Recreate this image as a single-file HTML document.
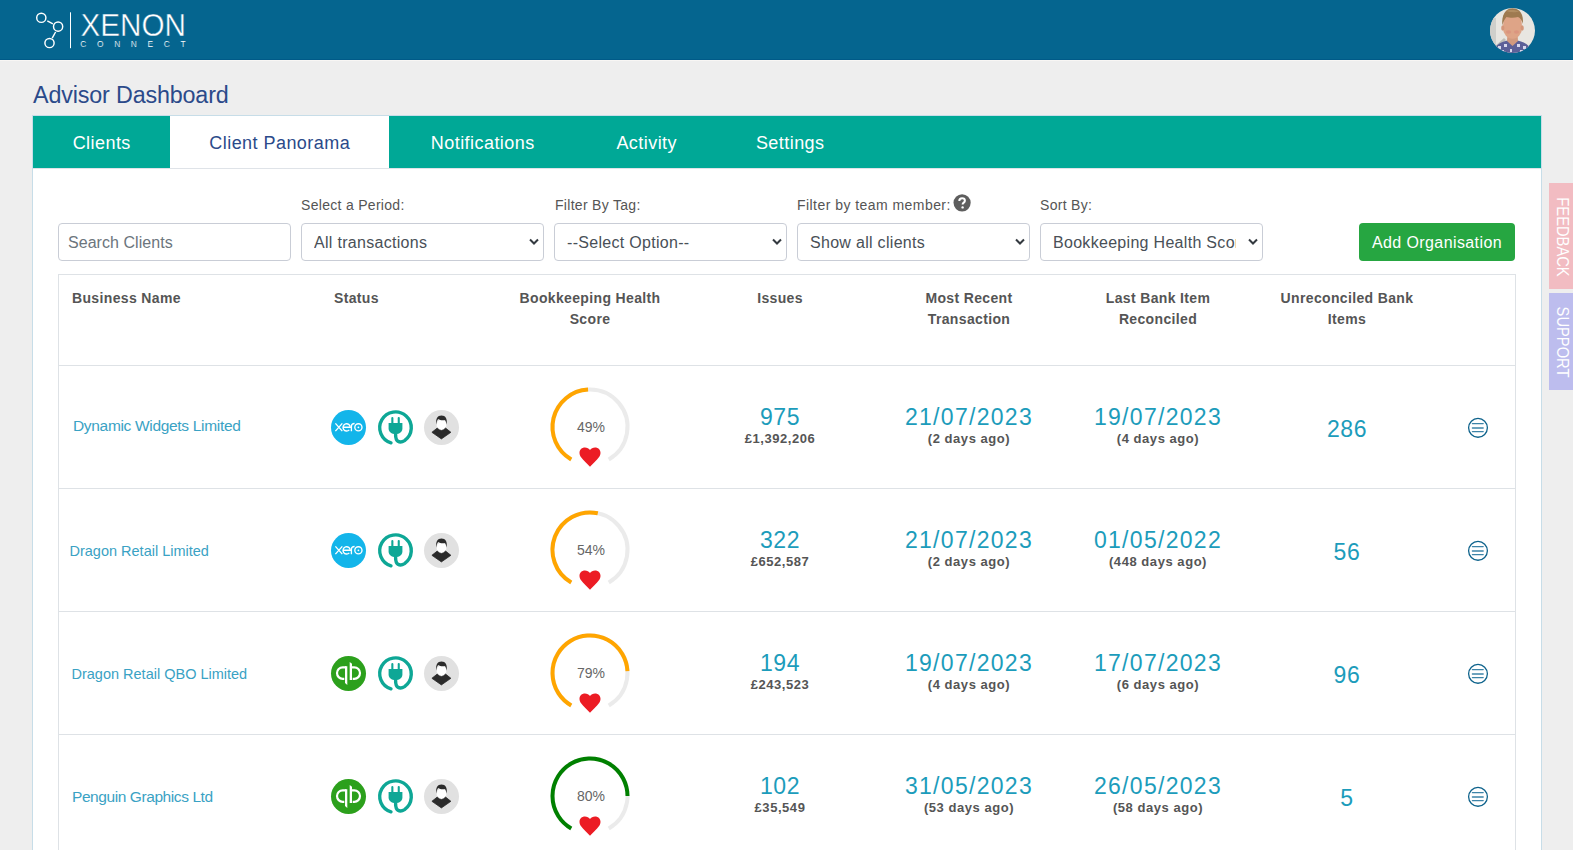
<!DOCTYPE html>
<html><head><meta charset="utf-8"><style>
*{box-sizing:border-box;margin:0;padding:0}
html,body{width:1573px;height:850px;overflow:hidden;background:#eeeeee;font-family:"Liberation Sans",sans-serif}
svg{position:absolute;overflow:visible}
#hdr{position:absolute;left:0;top:0;width:1573px;height:60px;background:#05658f}
#title{position:absolute;left:33px;top:80.7px;font-size:23.3px;line-height:28px;color:#2b4a8a;white-space:nowrap;letter-spacing:-0.15px}
#cont{position:absolute;left:32px;top:115px;width:1510px;height:760px;background:#fff;border:1px solid #c7dde8}
#tabs{position:absolute;left:33px;top:116px;width:1508px;height:53px;background:#00a896;border-bottom:1px solid #dfe3e8}
.tab{position:absolute;top:117px;height:52px;line-height:52px;font-size:18px;color:#fff;text-align:center;white-space:nowrap;letter-spacing:0.45px;text-indent:0.45px}
.tab.act{color:#2b4a8a}
#acttab{position:absolute;left:170px;top:116px;width:219px;height:52px;background:#fff}
.lbl{position:absolute;top:195.5px;font-size:14px;line-height:18px;color:#555;white-space:nowrap;letter-spacing:0.3px}
.inp{position:absolute;top:223px;height:38px;border:1px solid #c9cdd6;border-radius:4px;background:#fff;font-size:16px;line-height:37px;color:#495057;padding-left:12px;white-space:nowrap;overflow:hidden;letter-spacing:0.3px}
#btn{position:absolute;left:1359px;top:223px;width:156px;height:38px;background:#26a641;border-radius:4px;color:#fff;font-size:16px;line-height:39.6px;text-align:center;white-space:nowrap;letter-spacing:0.4px}
#tbl{position:absolute;left:58px;top:274px;width:1458px;height:600px;border:1px solid #dee2e6}
.hline{position:absolute;left:58px;width:1458px;height:1px;background:#dee2e6}
.th{position:absolute;font-size:14px;font-weight:bold;color:#555;line-height:21px;text-align:center;white-space:nowrap;width:240px;letter-spacing:0.35px}
.name{position:absolute;font-size:14.5px;color:#3aa2c4;white-space:nowrap;line-height:18px}
.big{position:absolute;font-size:23px;color:#1c9cbb;text-align:center;white-space:nowrap;line-height:28px;width:240px;letter-spacing:0.6px}
.sub{position:absolute;font-size:13px;font-weight:bold;color:#555;text-align:center;white-space:nowrap;line-height:16px;width:240px;letter-spacing:0.55px}
.pct{position:absolute;font-size:14px;color:#666;text-align:center;white-space:nowrap;line-height:16px;width:60px;letter-spacing:0px}
.side{position:absolute;left:1549px;width:24px;overflow:hidden}
.side span{position:absolute;left:calc(50% + 0.5px);top:calc(50% + 0.5px);transform:translate(-50%,-50%) rotate(90deg) scaleX(0.865);color:#fff;font-size:17px;white-space:nowrap;line-height:20px}
</style></head><body>
<div id="hdr"></div><div style="position:absolute;left:0;top:59px;width:1573px;height:1px;background:#005a88"></div><div style="position:absolute;left:0;top:60px;width:1573px;height:1px;background:#f8f6f4"></div>
<svg style="left:0;top:0" width="200" height="60" viewBox="0 0 200 60">
<g fill="none" stroke="#fff" stroke-width="1.45">
<circle cx="41.3" cy="17.8" r="4.6"/><circle cx="58.1" cy="26.6" r="4.6"/><circle cx="49.5" cy="43" r="4.6"/>
<line x1="47.3" y1="20.9" x2="52.9" y2="23.8"/><line x1="55.6" y1="32" x2="52.2" y2="38.1"/>
<line x1="70.5" y1="12.3" x2="70.5" y2="48.2" stroke-width="1"/>
</g>
<text x="80.5" y="36" fill="#fff" stroke="#05658f" stroke-width="0.45" font-family="Liberation Sans" font-size="30.5" textLength="105.5" lengthAdjust="spacingAndGlyphs">XENON</text>
<text x="80.3" y="47" fill="#fff" stroke="#05658f" stroke-width="0.15" font-family="Liberation Sans" font-size="8.4" letter-spacing="10.65">CONNECT</text>
</svg>
<svg style="left:1490px;top:8px" width="45" height="45" viewBox="0 0 45 45">
<defs><clipPath id="av"><circle cx="22.5" cy="22.5" r="22.5"/></clipPath></defs>
<g clip-path="url(#av)">
<rect width="45" height="45" fill="#e8e6e1"/>
<rect x="0" y="10" width="6" height="28" fill="#cfcfcb"/>
<path d="M3 40 L14 30 L16 32 L6 43 Z" fill="#bdbdb8"/>
<path d="M3 45 C4 39 8 35.5 14 33.5 L22.5 31 L31 33.5 C37 35.5 41 39 42 45 Z" fill="#5d6098"/>
<path d="M8 38 h3 v3 h-3z M14 36 h3 v3 h-3z M27 36 h3 v3 h-3z M33 38 h3 v3 h-3z M11 42 h3 v3 h-3z M30 42 h3 v3 h-3z M20 41 h2 v3 h-2z" fill="#d8d8ec"/>
<path d="M17.5 26 L27.5 26 L28 33 L22.5 38 L17 33 Z" fill="#d29a7f"/>
<path d="M13.4 7.5 H31.6 V22 H13.4 Z" fill="#dea487"/><ellipse cx="22.5" cy="19.5" rx="9.6" ry="11.3" fill="#dea487"/><ellipse cx="12.8" cy="20" rx="1.6" ry="2.8" fill="#d4967a"/><ellipse cx="32.2" cy="20" rx="1.6" ry="2.8" fill="#d4967a"/>
<ellipse cx="18.5" cy="24" rx="2.6" ry="1.8" fill="#d88c7a" opacity="0.6"/>
<ellipse cx="26.5" cy="24" rx="2.6" ry="1.8" fill="#d88c7a" opacity="0.6"/>
<path d="M12.4 17.5 C11.3 7.5 15.5 0.3 22.5 0.3 C30 0.3 34 7 32.8 16 C32 12.5 30.5 10 28 9 C24 10.3 19 9.8 16.5 9 C15 10.5 13.3 13.5 12.4 17.5 Z" fill="#9e7a50"/><path d="M16 3 C19 1.5 26 1.5 29 3.5 C26 4.5 20 4.5 16 3 Z" fill="#b8966a" opacity="0.7"/>
</g></svg>
<div id="title">Advisor Dashboard</div>
<div id="cont"></div>
<div id="tabs"></div>
<div id="acttab"></div>
<div class="tab" style="left:33px;width:137px">Clients</div>
<div class="tab act" style="left:170px;width:219px">Client Panorama</div>
<div class="tab" style="left:389px;width:187px">Notifications</div>
<div class="tab" style="left:576px;width:141px">Activity</div>
<div class="tab" style="left:717px;width:146px">Settings</div>
<div class="lbl" style="left:301px">Select a Period:</div>
<div class="lbl" style="left:555px">Filter By Tag:</div>
<div class="lbl" style="left:797px;letter-spacing:0.45px">Filter by team member:</div>
<div class="lbl" style="left:1040px">Sort By:</div>
<svg style="left:953px;top:194px" width="18" height="18" viewBox="0 0 18 18"><circle cx="9.1" cy="8.8" r="8.6" fill="#5e5e5e"/>
<path d="M6.3 7 C6.3 5.3 7.5 4.3 9.1 4.3 C10.8 4.3 11.9 5.3 11.9 6.7 C11.9 8.6 9.6 8.6 9.6 10.4" fill="none" stroke="#fff" stroke-width="2"/>
<circle cx="9.6" cy="13.4" r="1.2" fill="#fff"/></svg>
<div class="inp" style="left:58px;width:233px;color:#6c757d;padding-left:9px;letter-spacing:0.05px">Search Clients</div>
<div class="inp" style="left:301px;width:243px"><span style="display:block;width:203px;overflow:hidden">All transactions</span></div>
<svg style="left:529px;top:238px" width="10" height="8" viewBox="0 0 10 8"><path d="M1 1.5 L5 5.5 L9 1.5" fill="none" stroke="#343a40" stroke-width="2"/></svg>
<div class="inp" style="left:554px;width:233px"><span style="display:block;width:193px;overflow:hidden">--Select Option--</span></div>
<svg style="left:772px;top:238px" width="10" height="8" viewBox="0 0 10 8"><path d="M1 1.5 L5 5.5 L9 1.5" fill="none" stroke="#343a40" stroke-width="2"/></svg>
<div class="inp" style="left:797px;width:233px"><span style="display:block;width:193px;overflow:hidden">Show all clients</span></div>
<svg style="left:1015px;top:238px" width="10" height="8" viewBox="0 0 10 8"><path d="M1 1.5 L5 5.5 L9 1.5" fill="none" stroke="#343a40" stroke-width="2"/></svg>
<div class="inp" style="left:1040px;width:223px"><span style="display:block;width:183px;overflow:hidden">Bookkeeping Health Score</span></div>
<svg style="left:1248px;top:238px" width="10" height="8" viewBox="0 0 10 8"><path d="M1 1.5 L5 5.5 L9 1.5" fill="none" stroke="#343a40" stroke-width="2"/></svg>
<div id="btn">Add Organisation</div>
<div id="tbl"></div>
<div class="hline" style="top:365px"></div>
<div class="hline" style="top:488px"></div>
<div class="hline" style="top:611px"></div>
<div class="hline" style="top:734px"></div>
<div class="th" style="left:72px;top:288px;text-align:left">Business Name</div>
<div class="th" style="left:334px;top:288px;text-align:left">Status</div>
<div class="th" style="left:470px;top:288px">Bookkeeping Health<br>Score</div>
<div class="th" style="left:660px;top:288px">Issues</div>
<div class="th" style="left:849px;top:288px">Most Recent<br>Transaction</div>
<div class="th" style="left:1038px;top:288px">Last Bank Item<br>Reconciled</div>
<div class="th" style="left:1227px;top:288px">Unreconciled Bank<br>Items</div>
<div class="name" style="left:73px;top:416.75px;font-size:15.5px;letter-spacing:-0.32px">Dynamic Widgets Limited</div>
<svg style="left:328px;top:406px" width="42" height="42" viewBox="0 0 42 42"><circle cx="20.5" cy="21.5" r="17.5" fill="#13b5ea"/>
<g fill="none" stroke="#fff" stroke-width="1.35">
<path d="M7.4 17.4 L14.3 25.1 M14.3 17.4 L7.4 25.1"/>
<path d="M15.1 21.2 H22.3 A3.65 3.65 0 1 0 21.3 23.9"/>
<path d="M23.4 25.2 V20.6 C23.4 18.6 24.6 17.5 26.6 17.5"/>
<circle cx="30.4" cy="21.3" r="3.6"/>
</g><circle cx="30.4" cy="21.3" r="0.9" fill="#fff"/></svg>
<svg style="left:375px;top:406px" width="42" height="42" viewBox="0 0 42 42"><g fill="none" stroke="#0ea796" stroke-width="3.4" stroke-linecap="round">
<path d="M15.97 36.77 A15.77 15.77 0 1 1 29.55 34.59 C27.3 36 24.8 36.3 22.9 35.2 C21.2 34.2 20.6 32.2 20.6 28.5"/>
</g>
<g fill="#0ea796">
<path d="M13.6 17 H27.4 V22.6 C27.4 26.1 24.5 28.1 20.5 28.1 C16.5 28.1 13.6 26.1 13.6 22.6 Z"/>
<rect x="16.3" y="11" width="2.1" height="7" rx="1"/><rect x="22.7" y="11" width="2.1" height="7" rx="1"/>
</g></svg>
<svg style="left:421px;top:406px" width="42" height="42" viewBox="0 0 42 42"><circle cx="20.5" cy="21.5" r="17.5" fill="#e1e1e1"/>
<ellipse cx="20.5" cy="19" rx="4.9" ry="5.4" fill="#fff"/>
<path d="M10.9 26.3 L16.2 22.1 Q20.4 26.8 24.6 22.1 L29.9 26.3 L20.4 32.9 Z" fill="#2b2b2b" stroke="#2b2b2b" stroke-width="0.8" stroke-linejoin="round"/>
<path d="M15.3 18.8 C14.6 12.5 16.5 9.6 20.5 9.6 C24.5 9.6 26.4 12.5 25.7 18.8 C25.1 15.6 24.6 14.3 23.7 13.9 C21.6 14.9 18.9 14.2 17.4 12.9 C16.2 13.8 15.6 15.6 15.3 18.8 Z" fill="#2b2b2b"/></svg>
<svg style="left:545px;top:381.5px" width="90" height="90" viewBox="0 0 90 90"><path d="M26.25 77.48 A37.5 37.5 0 1 1 63.75 77.48" fill="none" stroke="#ebebeb" stroke-width="4"/><path d="M26.25 77.48 A37.5 37.5 0 0 1 43.04 7.55" fill="none" stroke="#ffa500" stroke-width="4"/><path transform="translate(34.5 65.4)" d="M10.5 19.3 C8 16.5 3.5 12.5 1.6 9.8 C0.5 8.3 0 6.8 0 5.3 C0 2.2 2.4 0 5.4 0 C7.6 0 9.4 1.1 10.5 2.7 C11.6 1.1 13.4 0 15.6 0 C18.6 0 21 2.2 21 5.3 C21 6.8 20.5 8.3 19.4 9.8 C17.5 12.5 13 16.5 10.5 19.3 Z" fill="#ec1c24"/></svg>
<div class="pct" style="left:561px;top:419px">49%</div>
<div class="big" style="left:660px;top:403px">975</div>
<div class="sub" style="left:660px;top:431px">£1,392,206</div>
<div class="big" style="left:849px;top:403px;letter-spacing:1.3px">21/07/2023</div>
<div class="sub" style="left:849px;top:431px">(2 days ago)</div>
<div class="big" style="left:1038px;top:403px;letter-spacing:1.3px">19/07/2023</div>
<div class="sub" style="left:1038px;top:431px">(4 days ago)</div>
<div class="big" style="left:1227px;top:415px">286</div>
<svg style="left:1464px;top:414px" width="28" height="28" viewBox="0 0 28 28"><circle cx="14" cy="13.85" r="9.4" fill="none" stroke="#0d628b" stroke-width="1.3"/>
<path d="M8.4 9.55 H19.2 M8.4 14 H19.2 M8.4 17.6 H19.2" stroke="#3d84a8" stroke-width="1.3" stroke-linecap="round"/></svg>
<div class="name" style="left:69.5px;top:541.5px;font-size:14.5px;letter-spacing:0px">Dragon Retail Limited</div>
<svg style="left:328px;top:529px" width="42" height="42" viewBox="0 0 42 42"><circle cx="20.5" cy="21.5" r="17.5" fill="#13b5ea"/>
<g fill="none" stroke="#fff" stroke-width="1.35">
<path d="M7.4 17.4 L14.3 25.1 M14.3 17.4 L7.4 25.1"/>
<path d="M15.1 21.2 H22.3 A3.65 3.65 0 1 0 21.3 23.9"/>
<path d="M23.4 25.2 V20.6 C23.4 18.6 24.6 17.5 26.6 17.5"/>
<circle cx="30.4" cy="21.3" r="3.6"/>
</g><circle cx="30.4" cy="21.3" r="0.9" fill="#fff"/></svg>
<svg style="left:375px;top:529px" width="42" height="42" viewBox="0 0 42 42"><g fill="none" stroke="#0ea796" stroke-width="3.4" stroke-linecap="round">
<path d="M15.97 36.77 A15.77 15.77 0 1 1 29.55 34.59 C27.3 36 24.8 36.3 22.9 35.2 C21.2 34.2 20.6 32.2 20.6 28.5"/>
</g>
<g fill="#0ea796">
<path d="M13.6 17 H27.4 V22.6 C27.4 26.1 24.5 28.1 20.5 28.1 C16.5 28.1 13.6 26.1 13.6 22.6 Z"/>
<rect x="16.3" y="11" width="2.1" height="7" rx="1"/><rect x="22.7" y="11" width="2.1" height="7" rx="1"/>
</g></svg>
<svg style="left:421px;top:529px" width="42" height="42" viewBox="0 0 42 42"><circle cx="20.5" cy="21.5" r="17.5" fill="#e1e1e1"/>
<ellipse cx="20.5" cy="19" rx="4.9" ry="5.4" fill="#fff"/>
<path d="M10.9 26.3 L16.2 22.1 Q20.4 26.8 24.6 22.1 L29.9 26.3 L20.4 32.9 Z" fill="#2b2b2b" stroke="#2b2b2b" stroke-width="0.8" stroke-linejoin="round"/>
<path d="M15.3 18.8 C14.6 12.5 16.5 9.6 20.5 9.6 C24.5 9.6 26.4 12.5 25.7 18.8 C25.1 15.6 24.6 14.3 23.7 13.9 C21.6 14.9 18.9 14.2 17.4 12.9 C16.2 13.8 15.6 15.6 15.3 18.8 Z" fill="#2b2b2b"/></svg>
<svg style="left:545px;top:504.5px" width="90" height="90" viewBox="0 0 90 90"><path d="M26.25 77.48 A37.5 37.5 0 1 1 63.75 77.48" fill="none" stroke="#ebebeb" stroke-width="4"/><path d="M26.25 77.48 A37.5 37.5 0 0 1 52.80 8.32" fill="none" stroke="#ffa500" stroke-width="4"/><path transform="translate(34.5 65.4)" d="M10.5 19.3 C8 16.5 3.5 12.5 1.6 9.8 C0.5 8.3 0 6.8 0 5.3 C0 2.2 2.4 0 5.4 0 C7.6 0 9.4 1.1 10.5 2.7 C11.6 1.1 13.4 0 15.6 0 C18.6 0 21 2.2 21 5.3 C21 6.8 20.5 8.3 19.4 9.8 C17.5 12.5 13 16.5 10.5 19.3 Z" fill="#ec1c24"/></svg>
<div class="pct" style="left:561px;top:542px">54%</div>
<div class="big" style="left:660px;top:526px">322</div>
<div class="sub" style="left:660px;top:554px">£652,587</div>
<div class="big" style="left:849px;top:526px;letter-spacing:1.3px">21/07/2023</div>
<div class="sub" style="left:849px;top:554px">(2 days ago)</div>
<div class="big" style="left:1038px;top:526px;letter-spacing:1.3px">01/05/2022</div>
<div class="sub" style="left:1038px;top:554px">(448 days ago)</div>
<div class="big" style="left:1227px;top:538px">56</div>
<svg style="left:1464px;top:537px" width="28" height="28" viewBox="0 0 28 28"><circle cx="14" cy="13.85" r="9.4" fill="none" stroke="#0d628b" stroke-width="1.3"/>
<path d="M8.4 9.55 H19.2 M8.4 14 H19.2 M8.4 17.6 H19.2" stroke="#3d84a8" stroke-width="1.3" stroke-linecap="round"/></svg>
<div class="name" style="left:71.5px;top:665px;font-size:14.5px;letter-spacing:0px">Dragon Retail QBO Limited</div>
<svg style="left:328px;top:652px" width="42" height="42" viewBox="0 0 42 42"><circle cx="20.5" cy="21.5" r="17.5" fill="#2ca01c"/>
<g fill="none" stroke="#fff" stroke-width="2.2">
<path d="M18.1 15.4 H14.7 A5.7 5.7 0 0 0 14.7 26.8 H16.3"/>
<path d="M22.9 15.4 H26.3 A5.7 5.7 0 0 1 26.3 26.8 H24.7"/>
</g>
<path d="M17 14.3 H19.3 V32.9 L17 31 Z M21.7 9.9 L24 11.8 V27.9 H21.7 Z" fill="#fff"/></svg>
<svg style="left:375px;top:652px" width="42" height="42" viewBox="0 0 42 42"><g fill="none" stroke="#0ea796" stroke-width="3.4" stroke-linecap="round">
<path d="M15.97 36.77 A15.77 15.77 0 1 1 29.55 34.59 C27.3 36 24.8 36.3 22.9 35.2 C21.2 34.2 20.6 32.2 20.6 28.5"/>
</g>
<g fill="#0ea796">
<path d="M13.6 17 H27.4 V22.6 C27.4 26.1 24.5 28.1 20.5 28.1 C16.5 28.1 13.6 26.1 13.6 22.6 Z"/>
<rect x="16.3" y="11" width="2.1" height="7" rx="1"/><rect x="22.7" y="11" width="2.1" height="7" rx="1"/>
</g></svg>
<svg style="left:421px;top:652px" width="42" height="42" viewBox="0 0 42 42"><circle cx="20.5" cy="21.5" r="17.5" fill="#e1e1e1"/>
<ellipse cx="20.5" cy="19" rx="4.9" ry="5.4" fill="#fff"/>
<path d="M10.9 26.3 L16.2 22.1 Q20.4 26.8 24.6 22.1 L29.9 26.3 L20.4 32.9 Z" fill="#2b2b2b" stroke="#2b2b2b" stroke-width="0.8" stroke-linejoin="round"/>
<path d="M15.3 18.8 C14.6 12.5 16.5 9.6 20.5 9.6 C24.5 9.6 26.4 12.5 25.7 18.8 C25.1 15.6 24.6 14.3 23.7 13.9 C21.6 14.9 18.9 14.2 17.4 12.9 C16.2 13.8 15.6 15.6 15.3 18.8 Z" fill="#2b2b2b"/></svg>
<svg style="left:545px;top:627.5px" width="90" height="90" viewBox="0 0 90 90"><path d="M26.25 77.48 A37.5 37.5 0 1 1 63.75 77.48" fill="none" stroke="#ebebeb" stroke-width="4"/><path d="M26.25 77.48 A37.5 37.5 0 1 1 82.45 43.04" fill="none" stroke="#ffa500" stroke-width="4"/><path transform="translate(34.5 65.4)" d="M10.5 19.3 C8 16.5 3.5 12.5 1.6 9.8 C0.5 8.3 0 6.8 0 5.3 C0 2.2 2.4 0 5.4 0 C7.6 0 9.4 1.1 10.5 2.7 C11.6 1.1 13.4 0 15.6 0 C18.6 0 21 2.2 21 5.3 C21 6.8 20.5 8.3 19.4 9.8 C17.5 12.5 13 16.5 10.5 19.3 Z" fill="#ec1c24"/></svg>
<div class="pct" style="left:561px;top:665px">79%</div>
<div class="big" style="left:660px;top:649px">194</div>
<div class="sub" style="left:660px;top:677px">£243,523</div>
<div class="big" style="left:849px;top:649px;letter-spacing:1.3px">19/07/2023</div>
<div class="sub" style="left:849px;top:677px">(4 days ago)</div>
<div class="big" style="left:1038px;top:649px;letter-spacing:1.3px">17/07/2023</div>
<div class="sub" style="left:1038px;top:677px">(6 days ago)</div>
<div class="big" style="left:1227px;top:661px">96</div>
<svg style="left:1464px;top:660px" width="28" height="28" viewBox="0 0 28 28"><circle cx="14" cy="13.85" r="9.4" fill="none" stroke="#0d628b" stroke-width="1.3"/>
<path d="M8.4 9.55 H19.2 M8.4 14 H19.2 M8.4 17.6 H19.2" stroke="#3d84a8" stroke-width="1.3" stroke-linecap="round"/></svg>
<div class="name" style="left:72px;top:787.65px;font-size:15.5px;letter-spacing:-0.42px">Penguin Graphics Ltd</div>
<svg style="left:328px;top:775px" width="42" height="42" viewBox="0 0 42 42"><circle cx="20.5" cy="21.5" r="17.5" fill="#2ca01c"/>
<g fill="none" stroke="#fff" stroke-width="2.2">
<path d="M18.1 15.4 H14.7 A5.7 5.7 0 0 0 14.7 26.8 H16.3"/>
<path d="M22.9 15.4 H26.3 A5.7 5.7 0 0 1 26.3 26.8 H24.7"/>
</g>
<path d="M17 14.3 H19.3 V32.9 L17 31 Z M21.7 9.9 L24 11.8 V27.9 H21.7 Z" fill="#fff"/></svg>
<svg style="left:375px;top:775px" width="42" height="42" viewBox="0 0 42 42"><g fill="none" stroke="#0ea796" stroke-width="3.4" stroke-linecap="round">
<path d="M15.97 36.77 A15.77 15.77 0 1 1 29.55 34.59 C27.3 36 24.8 36.3 22.9 35.2 C21.2 34.2 20.6 32.2 20.6 28.5"/>
</g>
<g fill="#0ea796">
<path d="M13.6 17 H27.4 V22.6 C27.4 26.1 24.5 28.1 20.5 28.1 C16.5 28.1 13.6 26.1 13.6 22.6 Z"/>
<rect x="16.3" y="11" width="2.1" height="7" rx="1"/><rect x="22.7" y="11" width="2.1" height="7" rx="1"/>
</g></svg>
<svg style="left:421px;top:775px" width="42" height="42" viewBox="0 0 42 42"><circle cx="20.5" cy="21.5" r="17.5" fill="#e1e1e1"/>
<ellipse cx="20.5" cy="19" rx="4.9" ry="5.4" fill="#fff"/>
<path d="M10.9 26.3 L16.2 22.1 Q20.4 26.8 24.6 22.1 L29.9 26.3 L20.4 32.9 Z" fill="#2b2b2b" stroke="#2b2b2b" stroke-width="0.8" stroke-linejoin="round"/>
<path d="M15.3 18.8 C14.6 12.5 16.5 9.6 20.5 9.6 C24.5 9.6 26.4 12.5 25.7 18.8 C25.1 15.6 24.6 14.3 23.7 13.9 C21.6 14.9 18.9 14.2 17.4 12.9 C16.2 13.8 15.6 15.6 15.3 18.8 Z" fill="#2b2b2b"/></svg>
<svg style="left:545px;top:750.5px" width="90" height="90" viewBox="0 0 90 90"><path d="M26.25 77.48 A37.5 37.5 0 1 1 63.75 77.48" fill="none" stroke="#ebebeb" stroke-width="4"/><path d="M26.25 77.48 A37.5 37.5 0 1 1 82.50 45.00" fill="none" stroke="#008000" stroke-width="4"/><path transform="translate(34.5 65.4)" d="M10.5 19.3 C8 16.5 3.5 12.5 1.6 9.8 C0.5 8.3 0 6.8 0 5.3 C0 2.2 2.4 0 5.4 0 C7.6 0 9.4 1.1 10.5 2.7 C11.6 1.1 13.4 0 15.6 0 C18.6 0 21 2.2 21 5.3 C21 6.8 20.5 8.3 19.4 9.8 C17.5 12.5 13 16.5 10.5 19.3 Z" fill="#ec1c24"/></svg>
<div class="pct" style="left:561px;top:788px">80%</div>
<div class="big" style="left:660px;top:772px">102</div>
<div class="sub" style="left:660px;top:800px">£35,549</div>
<div class="big" style="left:849px;top:772px;letter-spacing:1.3px">31/05/2023</div>
<div class="sub" style="left:849px;top:800px">(53 days ago)</div>
<div class="big" style="left:1038px;top:772px;letter-spacing:1.3px">26/05/2023</div>
<div class="sub" style="left:1038px;top:800px">(58 days ago)</div>
<div class="big" style="left:1227px;top:784px">5</div>
<svg style="left:1464px;top:783px" width="28" height="28" viewBox="0 0 28 28"><circle cx="14" cy="13.85" r="9.4" fill="none" stroke="#0d628b" stroke-width="1.3"/>
<path d="M8.4 9.55 H19.2 M8.4 14 H19.2 M8.4 17.6 H19.2" stroke="#3d84a8" stroke-width="1.3" stroke-linecap="round"/></svg>
<div class="side" style="top:183px;height:106px;background:#f2bcc2"><span>FEEDBACK</span></div>
<div class="side" style="top:293px;height:97px;background:#bdbdee"><span>SUPPORT</span></div>
</body></html>
